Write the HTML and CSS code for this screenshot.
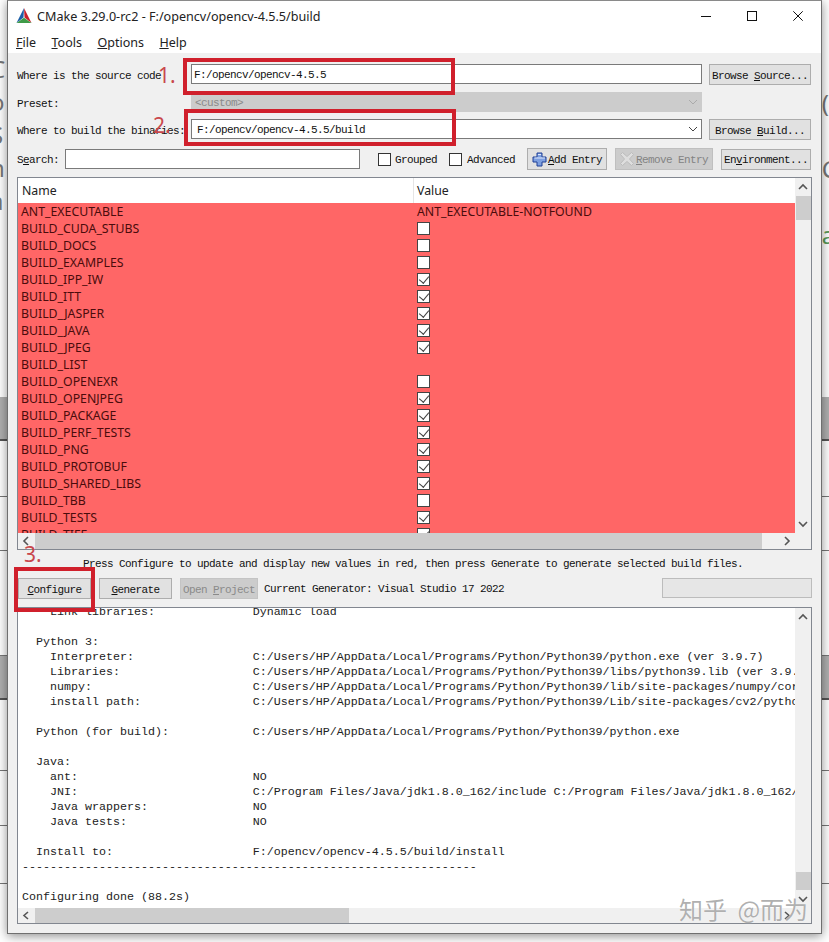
FILE: index.html
```html
<!DOCTYPE html>
<html lang="en">
<head>
<meta charset="utf-8">
<title>CMake 3.29.0-rc2</title>
<link rel="stylesheet" href="styles.css">
</head>
<body>
<div class="backdrop">
  <div class="bd-top"><span class="bd-l">C<br>o<br>S<br>n<br>a<br>i</span><span class="bd-r">(<br>C<br><em>a</em></span></div>
  <div class="bd-band"></div>
  <div class="bd-cell c1"></div>
  <div class="bd-cell c2"></div>
  <div class="bd-cell c3"></div>
  <div class="bd-band"></div>
  <div class="bd-cell c4"></div>
  <div class="bd-cell c5"></div>
  <div class="bd-cell c6"></div>
</div>

<main class="window">
  <header class="titlebar">
    <svg class="logo" width="16" height="16" viewBox="0 0 16 16"><path d="M8 0 L0.5 15 L7.5 9.5Z" fill="#1c5fa8"/><path d="M8 0 L15.5 15 L8.5 9.5Z" fill="#c8202c"/><path d="M0.5 15 L15.5 15 L8 9.8Z" fill="#3f9b48"/></svg>
    <span class="title">CMake 3.29.0-rc2 - F:/opencv/opencv-4.5.5/build</span>
    <div class="controls">
      <svg width="10" height="10" viewBox="0 0 10 10"><path d="M0 5.5H10" stroke="#111" stroke-width="1"/></svg>
      <svg width="10" height="10" viewBox="0 0 10 10"><rect x=".5" y=".5" width="9" height="9" fill="none" stroke="#111"/></svg>
      <svg width="10" height="10" viewBox="0 0 10 10"><path d="M.3.3 9.7 9.7M9.7.3.3 9.7" stroke="#111" stroke-width="1"/></svg>
    </div>
  </header>
  <nav class="menubar">
    <span><u>F</u>ile</span><span><u>T</u>ools</span><span><u>O</u>ptions</span><span><u>H</u>elp</span>
  </nav>

  <section class="content">
    <div class="row">
      <label class="lbl">Where is the source code</label>
      <div class="field src">F:/opencv/opencv-4.5.5</div>
      <button class="btn browse">Browse <u>S</u>ource...</button>
    </div>
    <div class="row short">
      <label class="lbl">Preset:</label>
      <div class="field preset">&lt;custom&gt;<svg class="combo" width="10" height="6" viewBox="0 0 10 6"><path d="M1 1 5 5 9 1" fill="none" stroke="#aaa"/></svg></div>
      <div class="browse-gap"></div>
    </div>
    <div class="row">
      <label class="lbl">Where to build the binaries:</label>
      <div class="field bld">F:/opencv/opencv-4.5.5/build<svg class="combo" width="10" height="6" viewBox="0 0 10 6"><path d="M1 1 5 5 9 1" fill="none" stroke="#444"/></svg></div>
      <button class="btn browse">Browse <u>B</u>uild...</button>
    </div>
    <div class="row tools">
      <label class="lbl-s">S<u>e</u>arch:</label>
      <div class="field search"></div>
      <span class="chk first"></span><span class="chk-t">Grouped</span>
      <span class="chk second"></span><span class="chk-t wide">Advanced</span>
      <button class="btn add"><svg width="15" height="15" viewBox="0 0 15 15"><path d="M5 1H10V5H14V10H10V14H5V10H1V5H5Z" fill="#7d9fe0" stroke="#1f3f96"/><path d="M6 2.5H9M2.5 6H13" stroke="#dfe8fb"/></svg><span><u>A</u>dd Entry</span></button>
      <button class="btn remove"><svg width="14" height="14" viewBox="0 0 14 14"><path d="M0.5 2.5 2.5 0.5 7 4.5 11.5 0.5 13.5 2.5 9.5 7 13.5 11.5 11.5 13.5 7 9.5 2.5 13.5 0.5 11.5 4.5 7Z" fill="#dedede" stroke="#bcbcbc"/></svg><span><u>R</u>emove Entry</span></button>
      <button class="btn env">En<u>v</u>ironment...</button>
    </div>

    <div class="table">
      <div class="tmain">
        <div class="thead"><span class="th-name">Name</span><span class="th-val">Value</span></div>
        <div class="tr"><span>ANT_EXECUTABLE</span><span>ANT_EXECUTABLE-NOTFOUND</span></div>
        <div class="tr"><span>BUILD_CUDA_STUBS</span><i class="box"></i></div>
        <div class="tr"><span>BUILD_DOCS</span><i class="box"></i></div>
        <div class="tr"><span>BUILD_EXAMPLES</span><i class="box"></i></div>
        <div class="tr"><span>BUILD_IPP_IW</span><i class="box on"></i></div>
        <div class="tr"><span>BUILD_ITT</span><i class="box on"></i></div>
        <div class="tr"><span>BUILD_JASPER</span><i class="box on"></i></div>
        <div class="tr"><span>BUILD_JAVA</span><i class="box on"></i></div>
        <div class="tr"><span>BUILD_JPEG</span><i class="box on"></i></div>
        <div class="tr"><span>BUILD_LIST</span></div>
        <div class="tr"><span>BUILD_OPENEXR</span><i class="box"></i></div>
        <div class="tr"><span>BUILD_OPENJPEG</span><i class="box on"></i></div>
        <div class="tr"><span>BUILD_PACKAGE</span><i class="box on"></i></div>
        <div class="tr"><span>BUILD_PERF_TESTS</span><i class="box on"></i></div>
        <div class="tr"><span>BUILD_PNG</span><i class="box on"></i></div>
        <div class="tr"><span>BUILD_PROTOBUF</span><i class="box on"></i></div>
        <div class="tr"><span>BUILD_SHARED_LIBS</span><i class="box on"></i></div>
        <div class="tr"><span>BUILD_TBB</span><i class="box"></i></div>
        <div class="tr"><span>BUILD_TESTS</span><i class="box on"></i></div>
        <div class="tr"><span>BUILD_TIFF</span><i class="box on"></i></div>
      </div>
      <div class="vbar">
        <svg class="arrow" width="16" height="18" viewBox="0 0 16 18"><path d="M4 11 8 7 12 11" fill="none" stroke="#555" stroke-width="1.6"/></svg>
        <div class="vthumb t1"></div>
        <svg class="arrow end" width="16" height="17" viewBox="0 0 16 17"><path d="M4 6 8 10 12 6" fill="none" stroke="#555" stroke-width="1.6"/></svg>
      </div>
      <div class="hbar">
        <svg class="arrow" width="17" height="16" viewBox="0 0 17 16"><path d="M10 4 6 8 10 12" fill="none" stroke="#555" stroke-width="1.6"/></svg>
        <div class="hthumb h1"></div>
        <svg class="arrow end" width="17" height="16" viewBox="0 0 17 16"><path d="M7 4 11 8 7 12" fill="none" stroke="#555" stroke-width="1.6"/></svg>
      </div>
      <div class="corner"></div>
    </div>

    <p class="msg">Press Configure to update and display new values in red, then press Generate to generate selected build files.</p>

    <div class="actions">
      <button class="btn act"><u>C</u>onfigure</button>
      <button class="btn act"><u>G</u>enerate</button>
      <button class="btn act open">Open <u>P</u>roject</button>
      <span class="gen">Current Generator: Visual Studio 17 2022</span>
      <div class="progress"></div>
    </div>

    <div class="table log">
      <div class="logmain"><pre>    Link libraries:              Dynamic load

  Python 3:
    Interpreter:                 C:/Users/HP/AppData/Local/Programs/Python/Python39/python.exe (ver 3.9.7)
    Libraries:                   C:/Users/HP/AppData/Local/Programs/Python/Python39/libs/python39.lib (ver 3.9.7)
    numpy:                       C:/Users/HP/AppData/Local/Programs/Python/Python39/lib/site-packages/numpy/core/include
    install path:                C:/Users/HP/AppData/Local/Programs/Python/Python39/Lib/site-packages/cv2/python-3.9

  Python (for build):            C:/Users/HP/AppData/Local/Programs/Python/Python39/python.exe

  Java:
    ant:                         NO
    JNI:                         C:/Program Files/Java/jdk1.8.0_162/include C:/Program Files/Java/jdk1.8.0_162/include/win32
    Java wrappers:               NO
    Java tests:                  NO

  Install to:                    F:/opencv/opencv-4.5.5/build/install
-----------------------------------------------------------------

Configuring done (88.2s)</pre></div>
      <div class="vbar">
        <svg class="arrow" width="16" height="18" viewBox="0 0 16 18"><path d="M4 11 8 7 12 11" fill="none" stroke="#555" stroke-width="1.6"/></svg>
        <div class="vthumb t2"></div>
        <svg class="arrow end" width="16" height="17" viewBox="0 0 16 17"><path d="M4 6 8 10 12 6" fill="none" stroke="#555" stroke-width="1.6"/></svg>
      </div>
      <div class="hbar">
        <svg class="arrow" width="17" height="15" viewBox="0 0 17 15"><path d="M10 4 6 7.5 10 11" fill="none" stroke="#555" stroke-width="1.6"/></svg>
        <div class="hthumb h2"></div>
        <svg class="arrow end" width="17" height="15" viewBox="0 0 17 15"><path d="M7 4 11 7.5 7 11" fill="none" stroke="#555" stroke-width="1.6"/></svg>
      </div>
      <div class="corner"></div>
    </div>
  </section>
</main>

<div class="mark m1"></div>
<div class="mark m2"></div>
<div class="mark m3"></div>
<span class="num n1">1.</span>
<span class="num n2">2.</span>
<span class="num n3">3.</span>
<span class="watermark">知乎 @而为</span>
</body>
</html>
```

FILE: styles.css
```css
* { box-sizing: border-box; }
html, body { margin: 0; padding: 0; }
body {
  width: 829px;
  height: 942px;
  position: relative;
  overflow: hidden;
  background: #fff;
  font-family: "Liberation Mono", "Noto Sans CJK SC", monospace;
  font-size: 11px;
  letter-spacing: -0.6px;
  color: #111;
}
u { text-underline-offset: 1px; }

/* page behind the window */
.backdrop { position: absolute; inset: 0; display: flex; flex-direction: column; }
.bd-top { height: 397px; flex: none; position: relative; font-family: "Noto Sans", sans-serif; font-size: 24px; letter-spacing: 0; color: #777; }
.bd-l { position: absolute; left: -10px; top: 52px; line-height: 33px; }
.bd-r { position: absolute; right: -8px; top: 70px; line-height: 66px; }
.bd-r em { font-style: normal; color: #5a9a5a; }
.bd-band { height: 44px; flex: none; background: #b0b0b0; border-bottom: 2px solid #555; }
.bd-cell { flex: none; border-bottom: 1px solid #777; }
.c1 { height: 56px; }
.c2 { height: 54px; }
.c3 { height: 105px; }
.c4 { height: 71px; }
.c5 { height: 55px; }
.c6 { height: 58px; }

/* window */
.window {
  position: relative;
  margin-left: 7px;
  width: 815px;
  height: 934px;
  background: #f0f0f0;
  border: 1px solid #6f6f6f;
  border-top-color: #8a8a8a;
  box-shadow: 0 2px 10px rgba(0, 0, 0, .45);
}
.titlebar {
  height: 30px;
  background: #fff;
  display: flex;
  align-items: center;
  padding-left: 8px;
  font-family: "Noto Sans", sans-serif;
  font-size: 12.6px;
  letter-spacing: 0;
}
.logo { flex: none; }
.title { margin-left: 5px; color: #222; }
.controls { margin-left: auto; display: flex; gap: 36px; padding-right: 18px; }
.controls svg { display: block; }
.menubar {
  height: 22px;
  background: #fff;
  display: flex;
  align-items: center;
  padding-left: 8px;
  gap: 15.5px;
  font-family: "Noto Sans", sans-serif;
  font-size: 12.5px;
  letter-spacing: 0;
  color: #222;
}
.content { padding: 11px 10px 0 9px; }
.row { display: flex; height: 21px; margin-bottom: 7px; align-items: flex-start; }
.row.short { height: 20px; }
.lbl { width: 174px; flex: none; line-height: 25px; white-space: nowrap; }
.field {
  position: relative;
  width: 511px;
  height: 20px;
  flex: none;
  background: #fff;
  border: 1px solid #7a7a7a;
  line-height: 20px;
  white-space: nowrap;
}
.src { padding-left: 2px; }
.bld { padding-left: 5px; }
.preset { background: #cccccc; border-color: #cccccc; color: #8a8a8a; padding-left: 3px; }
.combo { position: absolute; right: 3px; top: 6px; }
.btn {
  font: inherit;
  letter-spacing: inherit;
  color: inherit;
  background: #e1e1e1;
  border: 1px solid #adadad;
  padding: 0;
  white-space: nowrap;
}
.browse { width: 102px; height: 21px; margin-left: 7px; flex: none; padding-top: 2px; }
.browse-gap { width: 109px; }

.tools { height: 22px; margin-top: 8px; margin-bottom: 7px; align-items: center; }
.lbl-s { width: 48px; flex: none; padding-top: 2px; }
.search { width: 295px; }
.chk { width: 13px; height: 13px; background: #fff; border: 1px solid #333; flex: none; }
.chk.first { margin-left: 18px; }
.chk.second { margin-left: 12px; }
.chk-t { margin-left: 4px; padding-top: 2px; }
.chk-t.wide { margin-left: 5px; }
.add, .remove { height: 22px; display: flex; align-items: center; justify-content: center; gap: 2px; flex: none; padding-top: 1px; }
.add svg, .remove svg { margin-top: -1px; }
.add { width: 80px; margin-left: 12px; gap: 1px; }
.remove { width: 98px; margin-left: 8px; background: #cccccc; border-color: #bfbfbf; color: #838383; }
.env { width: 90px; height: 21px; margin-left: 8px; flex: none; padding-top: 2px; }

/* cache table */
.table {
  width: 795px;
  height: 373px;
  background: #f0f0f0;
  border: 1px solid #828790;
  display: grid;
  grid-template-columns: 777px 16px;
  grid-template-rows: 355px 16px;
}
.tmain {
  overflow: hidden;
  background: #ff6666;
  font-family: "Noto Sans", sans-serif;
  font-size: 12.3px;
  letter-spacing: 0;
  color: #4a0c0c;
}
.thead {
  height: 25px;
  background: #fff;
  display: grid;
  grid-template-columns: 396px 1fr;
  align-items: center;
  color: #222;
}
.th-name { padding-left: 4px; height: 100%; line-height: 25px; border-right: 1px solid #e5e5e5; }
.th-val { padding-left: 3px; }
.tr {
  height: 17px;
  display: grid;
  grid-template-columns: 396px 1fr;
  align-items: center;
  padding-left: 3px;
  line-height: 17px;
  white-space: nowrap;
}
.box {
  display: block;
  width: 13px;
  height: 13px;
  background: #fff;
  border: 1px solid #444;
  position: relative;
}
.box.on::after {
  content: "";
  position: absolute;
  left: 3px;
  top: 0;
  width: 5px;
  height: 8px;
  border: solid #444;
  border-width: 0 1.3px 1.3px 0;
  transform: rotate(40deg);
}
.vbar { display: flex; flex-direction: column; background: #f0f0f0; }
.arrow { display: block; flex: none; }
.arrow.end { margin-top: auto; }
.vthumb { width: 15px; margin-left: 1px; background: #cdcdcd; flex: none; }
.t1 { height: 24px; }
.t2 { height: 18px; margin-top: 246px; }
.hbar { display: flex; background: #f0f0f0; }
.hthumb { background: #cdcdcd; flex: none; height: 100%; }
.hbar .arrow.end { margin-top: 0; margin-left: auto; }
.h1 { width: 727px; }
.h2 { width: 314px; }
.corner { background: #f0f0f0; }

.msg { margin: 0; height: 28px; padding-left: 66px; line-height: 28px; white-space: nowrap; }
.actions { display: flex; align-items: flex-start; height: 21px; margin-bottom: 8px; padding-left: 1px; }
.act { width: 73px; height: 21px; margin-right: 8px; flex: none; padding-top: 2px; }
.open { width: 78px; margin-right: 6px; background: #cccccc; border-color: #c4c4c4; color: #8a8a8a; }
.gen { line-height: 23px; white-space: nowrap; }
.progress { margin-left: auto; margin-right: -1px; width: 150px; height: 20px; background: #e6e6e6; border: 1px solid #bcbcbc; }

/* output log */
.log { height: 317px; grid-template-rows: 300px 15px; background: #f0f0f0; }
.logmain { background: #fff; overflow: hidden; }
.logmain pre {
  margin: -3px 0 0;
  padding-left: 4px;
  font-family: "Liberation Mono", monospace;
  font-size: 11.67px;
  letter-spacing: 0;
  line-height: 15px;
  color: #222;
}

/* annotations drawn over the screenshot */
.mark { position: absolute; border: 4px solid #d0202c; }
.m1 { left: 183px; top: 58px; width: 272px; height: 37px; }
.m2 { left: 184px; top: 109px; width: 272px; height: 37px; }
.m3 { left: 14px; top: 567px; width: 81px; height: 45px; }
.num { position: absolute; font-family: "Noto Sans", sans-serif; font-size: 21px; line-height: 24px; letter-spacing: 0; color: #c9474c; }
.n1 { left: 158px; top: 63px; }
.n2 { left: 153px; top: 113px; }
.n3 { left: 24px; top: 542px; }
.watermark {
  position: absolute;
  left: 679px;
  top: 892px;
  font-family: "Noto Sans CJK SC", sans-serif;
  font-size: 24px;
  line-height: 34px;
  letter-spacing: 0;
  word-spacing: 5px;
  white-space: nowrap;
  color: rgba(150, 150, 150, .75);
  text-shadow: 0 0 1px #fff;
}
```
